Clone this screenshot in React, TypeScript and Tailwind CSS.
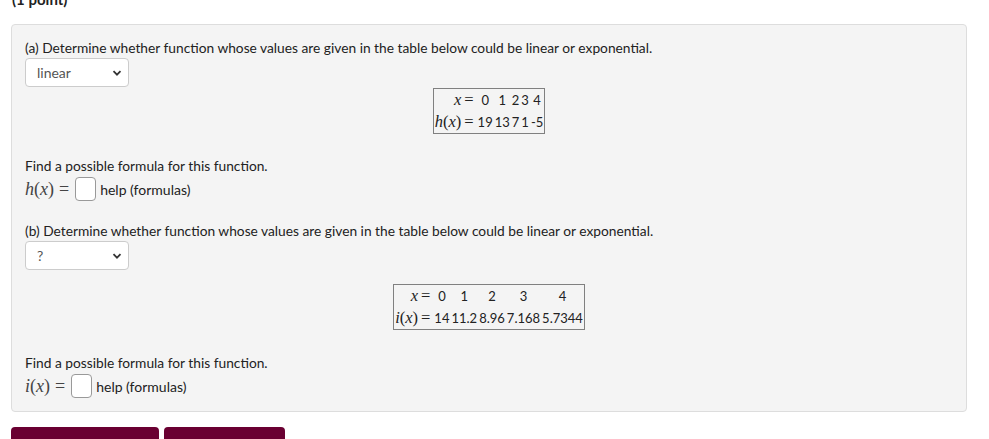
import React from "react";

const SERIF = '"Liberation Serif", "DejaVu Serif", serif';

const MI = ({ children }: { children: React.ReactNode }) => (
  <span className="italic" style={{ fontFamily: SERIF }}>{children}</span>
);

const Eq = () => <span className="mx-[3px]">=</span>;

function Select({ value }: { value: string }) {
  return (
    <div className="flex h-[29px] w-[104px] items-center justify-between rounded-[4px] border border-[#cccccc] bg-white pl-[11px] pr-[6px] text-[14px] text-[#555555]">
      <span>{value}</span>
      <svg width="10" height="10" viewBox="0 0 10 10">
        <path d="M1.5 3.2 L5 6.7 L8.5 3.2" fill="none" stroke="#333" strokeWidth="1.8" />
      </svg>
    </div>
  );
}

function Table({ label, xs, ys }: { label: string; xs: string[]; ys: string[] }) {
  return (
    <table className="border-collapse border border-[#808080] text-[13px] text-[#222]" style={{ lineHeight: "22px" }}>
      <tbody>
        <tr>
          <td className="whitespace-nowrap p-0 pl-[1px] text-right">
            <span className="text-[16.5px]" style={{ fontFamily: SERIF }}><MI>x</MI><Eq /></span>
          </td>
          {xs.map((v, i) => (
            <td key={i} className="whitespace-nowrap px-[1px] py-0 text-center">{v}</td>
          ))}
        </tr>
        <tr>
          <td className="whitespace-nowrap p-0 pl-[1px] text-right">
            <span className="text-[16.5px]" style={{ fontFamily: SERIF }}><MI>{label}</MI>(<MI>x</MI>)<Eq /></span>
          </td>
          {ys.map((v, i) => (
            <td key={i} className="whitespace-nowrap px-[1px] py-0 text-center">{v}</td>
          ))}
        </tr>
      </tbody>
    </table>
  );
}

function Formula({ label }: { label: string }) {
  return (
    <div className="mt-[1px] flex h-[24px] items-center">
      <span className="text-[18px] text-[#444]" style={{ fontFamily: SERIF }}>
        <MI>{label}</MI>(<MI>x</MI>)<span className="ml-[5px]">=</span>
      </span>
      <div className="ml-[6px] h-[24px] w-[21px] rounded-[4px] border border-[#999999] bg-white" />
      <span className="ml-[4px] text-[14px] text-[#222]">help (formulas)</span>
    </div>
  );
}

export default function App() {
  return (
    <div className="min-h-[439px] bg-white" style={{ fontFamily: 'Lato, "Open Sans", sans-serif' }}>
      <div className="h-[24px] overflow-hidden">
        <div className="-mt-[12px] pl-[12px] text-[15px] font-bold text-[#222]">(1 point)</div>
      </div>
      <div className="ml-[11px] w-[956px] rounded-[4px] border border-[#dddddd] bg-[#f4f4f4] px-[13px] pb-[13px] pt-[13px] text-[13.75px] text-[#222]">
        <div className="leading-[20px]">(a) Determine whether function whose values are given in the table below could be linear or exponential.</div>
        <Select value="linear" />
        <div className="mt-[1px] flex justify-center">
          <Table label="h" xs={["0", "1", "2", "3", "4"]} ys={["19", "13", "7", "1", "-5"]} />
        </div>
        <div className="mt-[22px] leading-[20px]">Find a possible formula for this function.</div>
        <Formula label="h" />
        <div className="mt-[20px] leading-[20px]">(b) Determine whether function whose values are given in the table below could be linear or exponential.</div>
        <Select value="?" />
        <div className="mt-[14px] flex justify-center">
          <Table label="i" xs={["0", "1", "2", "3", "4"]} ys={["14", "11.2", "8.96", "7.168", "5.7344"]} />
        </div>
        <div className="mt-[23px] leading-[20px]">Find a possible formula for this function.</div>
        <Formula label="i" />
      </div>
      <div className="ml-[11px] mt-[15px] flex gap-[5px]">
        <div className="h-[20px] w-[148px] rounded-t-[4px] bg-[#6a0032]" />
        <div className="h-[20px] w-[121px] rounded-t-[4px] bg-[#6a0032]" />
      </div>
    </div>
  );
}
